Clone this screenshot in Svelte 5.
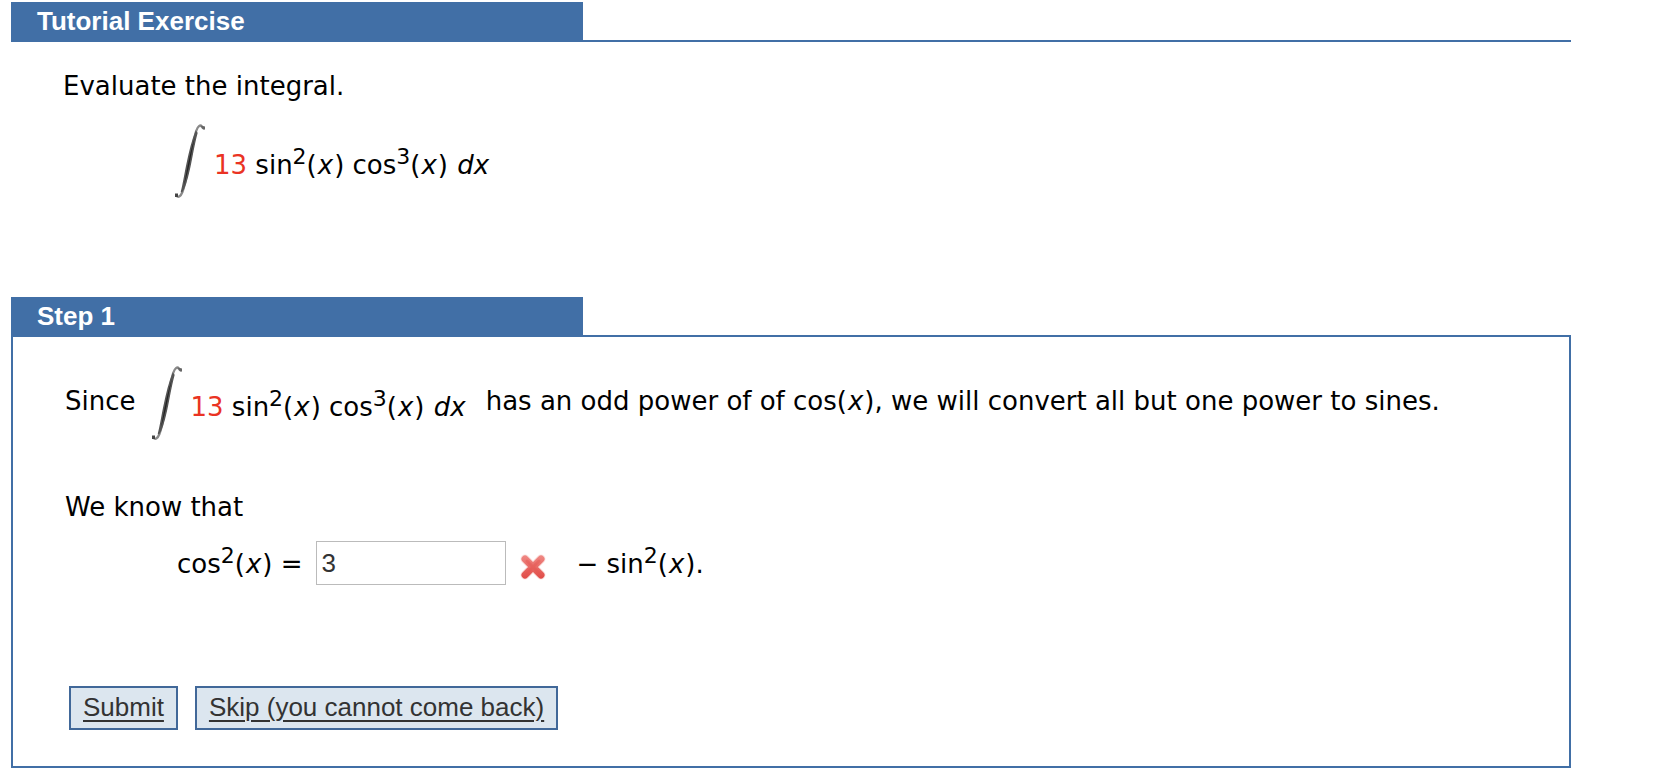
<script lang="ts">
  let answer = $state('3');
</script>

{#snippet integral()}
  <span class="integral">
    <svg class="sign" viewBox="0 0 30 74" role="img" aria-label="integral">
      <path
        d="M29.500 4C28.500 4.300 27.600 3.800 26.800 2.500C25.300 .5 22.800 2 21.200 7C18.800 14 15.900 32 13.300 44C11.300 54 9.400 63 7.300 68.300C5.400 73 3.400 73.800 1 71.500"
        fill="none" stroke="#8a8a8a" stroke-width="2.400" />
      <path d="M21 8C18 15 14 31 11.800 42C9.800 52 8.200 62 6.500 68C9.500 64 12.200 54 14.400 44C17 32 18.500 21 21.800 9Z" fill="#222" stroke="#555" stroke-width="1.600" />
      <path d="M0 69.500H3V73H0Z" fill="#444" />
      <path d="M25.500 1.500L30 2.500V5.500H28Z" fill="#666" />
    </svg>
    <span class="math"><span class="num">13</span> sin<sup>2</sup>(<i>x</i>) cos<sup>3</sup>(<i>x</i>) <i>dx</i></span>
  </span>
{/snippet}

<main>
  <section>
    <header><h2>Tutorial Exercise</h2></header>
    <div class="body exercise">
      <p>Evaluate the integral.</p>
      <div class="indent">{@render integral()}</div>
    </div>
  </section>

  <section>
    <header><h2>Step 1</h2></header>
    <form class="body step" onsubmit={(e) => e.preventDefault()}>
      <div class="since">
        <span class="words">Since</span>
        {@render integral()}
        <span class="words">has an odd power of of cos(<i>x</i>), we will convert all but one power to sines.</span>
      </div>
      <p class="know">We know that</p>
      <div class="indent equation">
        <label for="answer">cos<sup>2</sup>(<i>x</i>) =</label>
        <input id="answer" type="text" bind:value={answer} />
        <svg class="wrong" viewBox="0 0 28 28" role="img" aria-label="Incorrect">
          <defs>
            <linearGradient id="red" gradientUnits="userSpaceOnUse" x1="0" y1="2" x2="0" y2="26">
              <stop offset="0" stop-color="#f08a86" />
              <stop offset="1" stop-color="#e04a45" />
            </linearGradient>
          </defs>
          <path d="M6 6L22 22M22 6L6 22" stroke="#fbe3e1" stroke-width="9" stroke-linecap="round" />
          <path d="M6 6L22 22M22 6L6 22" stroke="url(#red)" stroke-width="7" stroke-linecap="round" />
          <path d="M8 8L20 20M20 8L8 20" stroke="#e6524d" stroke-width="3" stroke-linecap="round" opacity=".4" />
        </svg>
        <span class="rest">− sin<sup>2</sup>(<i>x</i>).</span>
      </div>
      <div class="actions">
        <button type="submit">Submit</button>
        <button type="button">Skip (you cannot come back)</button>
      </div>
    </form>
  </section>
</main>

<style>
  :global(body) {
    background: #fff;
  }
  main {
    margin: 2px 107px 4px 11px;
    color: #000;
    font: 26px/32px Verdana, 'DejaVu Sans', sans-serif;
  }
  header {
    border-bottom: 2px solid #416fa6;
  }
  h2 {
    box-sizing: border-box;
    width: 572px;
    max-width: 100%;
    height: 38px;
    margin: 0;
    padding: 3px 26px;
    background: #416fa6;
    color: #fff;
    font: bold 26px/32px 'Liberation Sans', Arial, sans-serif;
  }
  p {
    margin: 0;
  }
  sup {
    font-size: 22px;
    line-height: 0;
    vertical-align: 10px;
  }
  i {
    padding: 0 1px;
  }
  .exercise {
    padding: 28px 52px 99px;
  }
  .indent {
    padding-left: 112px;
  }
  .exercise .indent {
    padding-top: 22px;
  }
  .integral {
    display: flex;
    align-items: center;
    gap: 9px;
    padding-right: 3px;
    white-space: nowrap;
  }
  .sign {
    width: 30px;
    height: 74px;
    flex: none;
  }
  .math {
    padding-top: 8px;
  }
  .num {
    color: #ea3323;
  }
  .step {
    padding: 29px 52px 36px;
    border: 2px solid #416fa6;
    border-top: 0;
  }
  .since {
    display: flex;
    align-items: center;
    gap: 16px;
  }
  .words {
    padding-bottom: 4px;
  }
  .know {
    padding-top: 51px;
  }
  .equation {
    display: flex;
    align-items: center;
    padding-top: 18px;
  }
  .equation label,
  .rest {
    padding-top: 2px;
  }
  input {
    box-sizing: border-box;
    width: 190px;
    height: 44px;
    margin: 0 13px;
    padding: 0 5px;
    border: 1px solid #bbb;
    background: #fff;
    color: #333;
    font: 26px 'Liberation Sans', Arial, sans-serif;
  }
  .wrong {
    width: 28px;
    height: 28px;
    margin-top: 8px;
  }
  .rest {
    padding-left: 30px;
  }
  .actions {
    display: flex;
    gap: 17px;
    padding: 101px 0 0 4px;
  }
  button {
    height: 44px;
    padding: 0 12px 2px;
    border: 2px solid #416899;
    background: #dce6ef;
    color: #333;
    font: 26px 'Liberation Sans', Arial, sans-serif;
    text-decoration: underline;
    text-decoration-thickness: 2px;
    text-underline-offset: 4px;
  }
</style>
